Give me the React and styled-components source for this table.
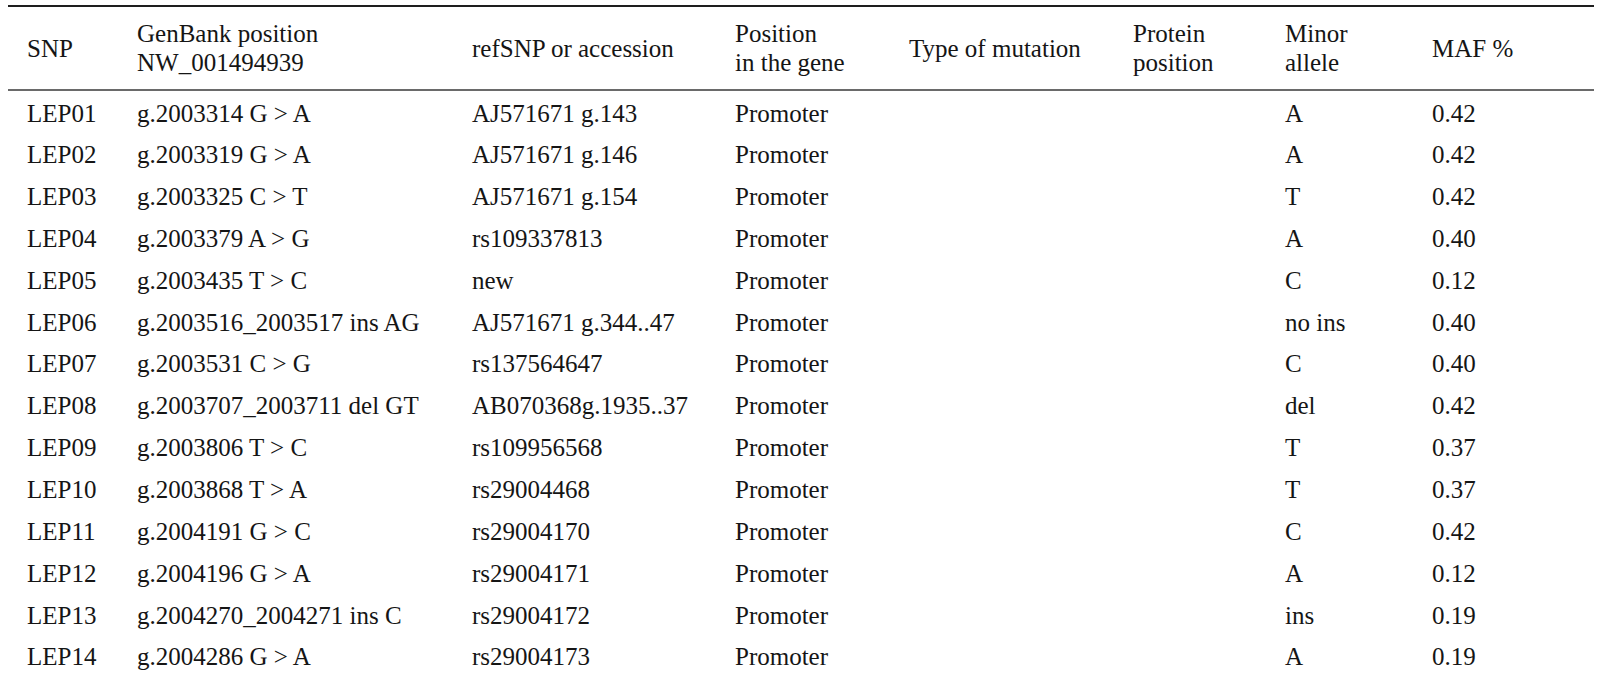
import React from 'react';
import styled, { createGlobalStyle } from 'styled-components';

const GlobalStyle = createGlobalStyle`
  html, body {
    margin: 0;
    padding: 0;
    background: #fff;
  }
  body {
    font-family: "Liberation Serif", "Times New Roman", serif;
    color: #151515;
  }
`;

const rows = [
  ['LEP01', 'g.2003314 G > A', 'AJ571671 g.143', 'Promoter', '', '', 'A', '0.42'],
  ['LEP02', 'g.2003319 G > A', 'AJ571671 g.146', 'Promoter', '', '', 'A', '0.42'],
  ['LEP03', 'g.2003325 C > T', 'AJ571671 g.154', 'Promoter', '', '', 'T', '0.42'],
  ['LEP04', 'g.2003379 A > G', 'rs109337813', 'Promoter', '', '', 'A', '0.40'],
  ['LEP05', 'g.2003435 T > C', 'new', 'Promoter', '', '', 'C', '0.12'],
  ['LEP06', 'g.2003516_2003517 ins AG', 'AJ571671 g.344..47', 'Promoter', '', '', 'no ins', '0.40'],
  ['LEP07', 'g.2003531 C > G', 'rs137564647', 'Promoter', '', '', 'C', '0.40'],
  ['LEP08', 'g.2003707_2003711 del GT', 'AB070368g.1935..37', 'Promoter', '', '', 'del', '0.42'],
  ['LEP09', 'g.2003806 T > C', 'rs109956568', 'Promoter', '', '', 'T', '0.37'],
  ['LEP10', 'g.2003868 T > A', 'rs29004468', 'Promoter', '', '', 'T', '0.37'],
  ['LEP11', 'g.2004191 G > C', 'rs29004170', 'Promoter', '', '', 'C', '0.42'],
  ['LEP12', 'g.2004196 G > A', 'rs29004171', 'Promoter', '', '', 'A', '0.12'],
  ['LEP13', 'g.2004270_2004271 ins C', 'rs29004172', 'Promoter', '', '', 'ins', '0.19'],
  ['LEP14', 'g.2004286 G > A', 'rs29004173', 'Promoter', '', '', 'A', '0.19'],
];

const headers = [
  ['SNP'],
  ['GenBank position', 'NW_001494939'],
  ['refSNP or accession'],
  ['Position', 'in the gene'],
  ['Type of mutation'],
  ['Protein', 'position'],
  ['Minor', 'allele'],
  ['MAF %'],
];

const colWidths = [129, 335, 263, 174, 224, 152, 147, 162];

const App = () => (
  <>
    <GlobalStyle />
    <Page>
      <Table>
        <colgroup>
          {colWidths.map((w, i) => (
            <col key={i} style={{ width: w }} />
          ))}
        </colgroup>
        <thead>
          <tr>
            {headers.map((lines, i) => (
              <HeadCell key={i} $first={i === 0}>
                {lines.map(line => (
                  <HeadLine key={line}>{line}</HeadLine>
                ))}
              </HeadCell>
            ))}
          </tr>
        </thead>
        <tbody>
          {rows.map(row => (
            <Row key={row[0]}>
              {row.map((cell, i) => (
                <Cell key={i} $first={i === 0}>
                  {cell}
                </Cell>
              ))}
            </Row>
          ))}
        </tbody>
      </Table>
    </Page>
  </>
);

export default App;

const Page = styled.div`
  padding: 5px 6px 0 8px;
`;

const Table = styled.table`
  width: 1586px;
  table-layout: fixed;
  border-collapse: collapse;
  border-top: 2px solid #1e1e1e;
  font-size: 25px;
`;

const HeadCell = styled.th`
  height: 82px;
  padding: 0 0 0 ${({ $first }) => ($first ? '19px' : '0')};
  text-align: left;
  vertical-align: middle;
  font-weight: normal;
  border-bottom: 2px solid #6a6a6a;
  line-height: 29px;
`;

const HeadLine = styled.div`
  white-space: nowrap;
`;

const Row = styled.tr`
  height: 41.85px;
`;

const Cell = styled.td`
  padding: 5px 0 0 ${({ $first }) => ($first ? '19px' : '0')};
  white-space: nowrap;
  vertical-align: middle;
  line-height: 28px;
`;
